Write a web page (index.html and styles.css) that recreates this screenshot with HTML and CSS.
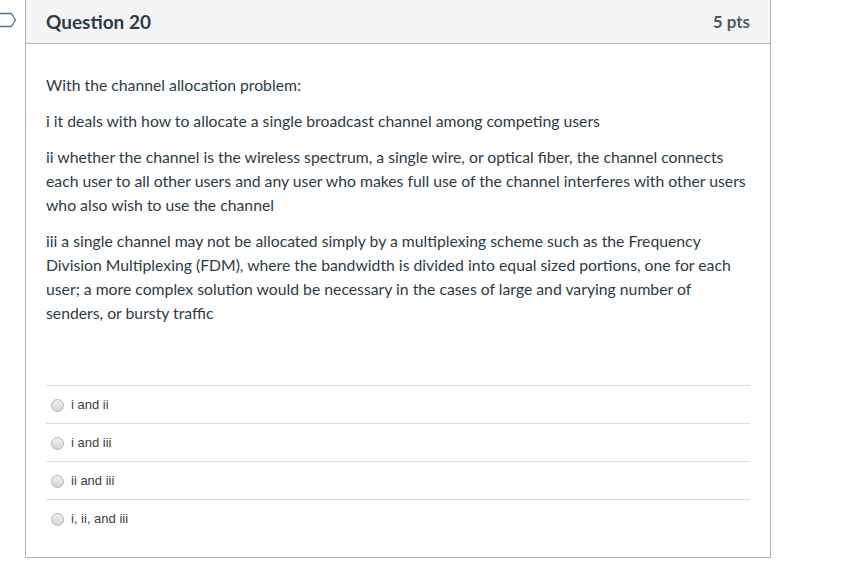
FILE: index.html
```html
<!DOCTYPE html>
<html>
<head>
<meta charset="utf-8">
<link rel="stylesheet" href="styles.css">
</head>
<body>
<svg class="flag" width="18" height="18" viewBox="0 0 18 18"><path d="M-4 2.5 H11.5 L15.5 9 L11.5 15.5 H-4" fill="none" stroke="#4d7191" stroke-width="1.3" stroke-linejoin="round"/></svg>
<div class="card">
  <div class="header">
    <span class="title">Question 20</span>
    <span class="pts">5 pts</span>
  </div>
  <div class="content">
    <div class="qtext">
      <p>With the channel allocation problem:</p>
      <p>i it deals with how to allocate a single broadcast channel among competing users</p>
      <p>ii whether the channel is the wireless spectrum, a single wire, or optical fiber, the channel connects each user to all other users and any user who makes full use of the channel interferes with other users who also wish to use the channel</p>
      <p>iii a single channel may not be allocated simply by a multiplexing scheme such as the Frequency Division Multiplexing (FDM), where the bandwidth is divided into equal sized portions, one for each user; a more complex solution would be necessary in the cases of large and varying number of senders, or bursty traffic</p>
    </div>
    <div class="answers">
      <div class="answer"><span class="radio"></span><span class="label">i and ii</span></div>
      <div class="answer"><span class="radio"></span><span class="label">i and iii</span></div>
      <div class="answer"><span class="radio"></span><span class="label">ii and iii</span></div>
      <div class="answer"><span class="radio"></span><span class="label">i, ii, and iii</span></div>
    </div>
  </div>
</div>
</body>
</html>
```
FILE: styles.css
```css
html, body {
  margin: 0;
  padding: 0;
  background: #fff;
}
body {
  font-family: Lato, "Liberation Sans", sans-serif;
  color: #2d3b45;
  position: relative;
  width: 858px;
  height: 586px;
  overflow: hidden;
}
.flag {
  position: absolute;
  left: 0;
  top: 11px;
}
.card {
  margin-left: 25px;
  margin-top: -1px;
  width: 744px;
  border: 1px solid #b5b5b5;
}
.header {
  height: 43px;
  background: #f5f5f5;
  border-bottom: 1px solid #b5b5b5;
  display: flex;
  align-items: center;
  justify-content: space-between;
  padding: 0 20px;
}
.title {
  font-weight: 700;
  font-size: 19px;
  color: #2d3b45;
}
.pts {
  font-weight: 700;
  font-size: 17px;
  color: #4b5b66;
}
.content {
  padding: 29px 20px 20px;
}
.qtext p {
  margin: 0 0 12px;
  font-size: 15.75px;
  line-height: 24px;
}
.answers {
  margin-top: 60px;
}
.answer {
  border-top: 1px solid #dddddd;
  height: 37px;
  display: flex;
  align-items: center;
}
.radio {
  width: 11px;
  height: 11px;
  border-radius: 50%;
  border: 1px solid #b3b3b3;
  background: linear-gradient(#f0f0f0, #d6d6d6);
  margin-left: 5px;
  margin-right: 7px;
  margin-top: 1px;
}
.label {
  font-family: "Liberation Sans", Arial, sans-serif;
  font-size: 13px;
  color: #3d3d3d;
}
```
